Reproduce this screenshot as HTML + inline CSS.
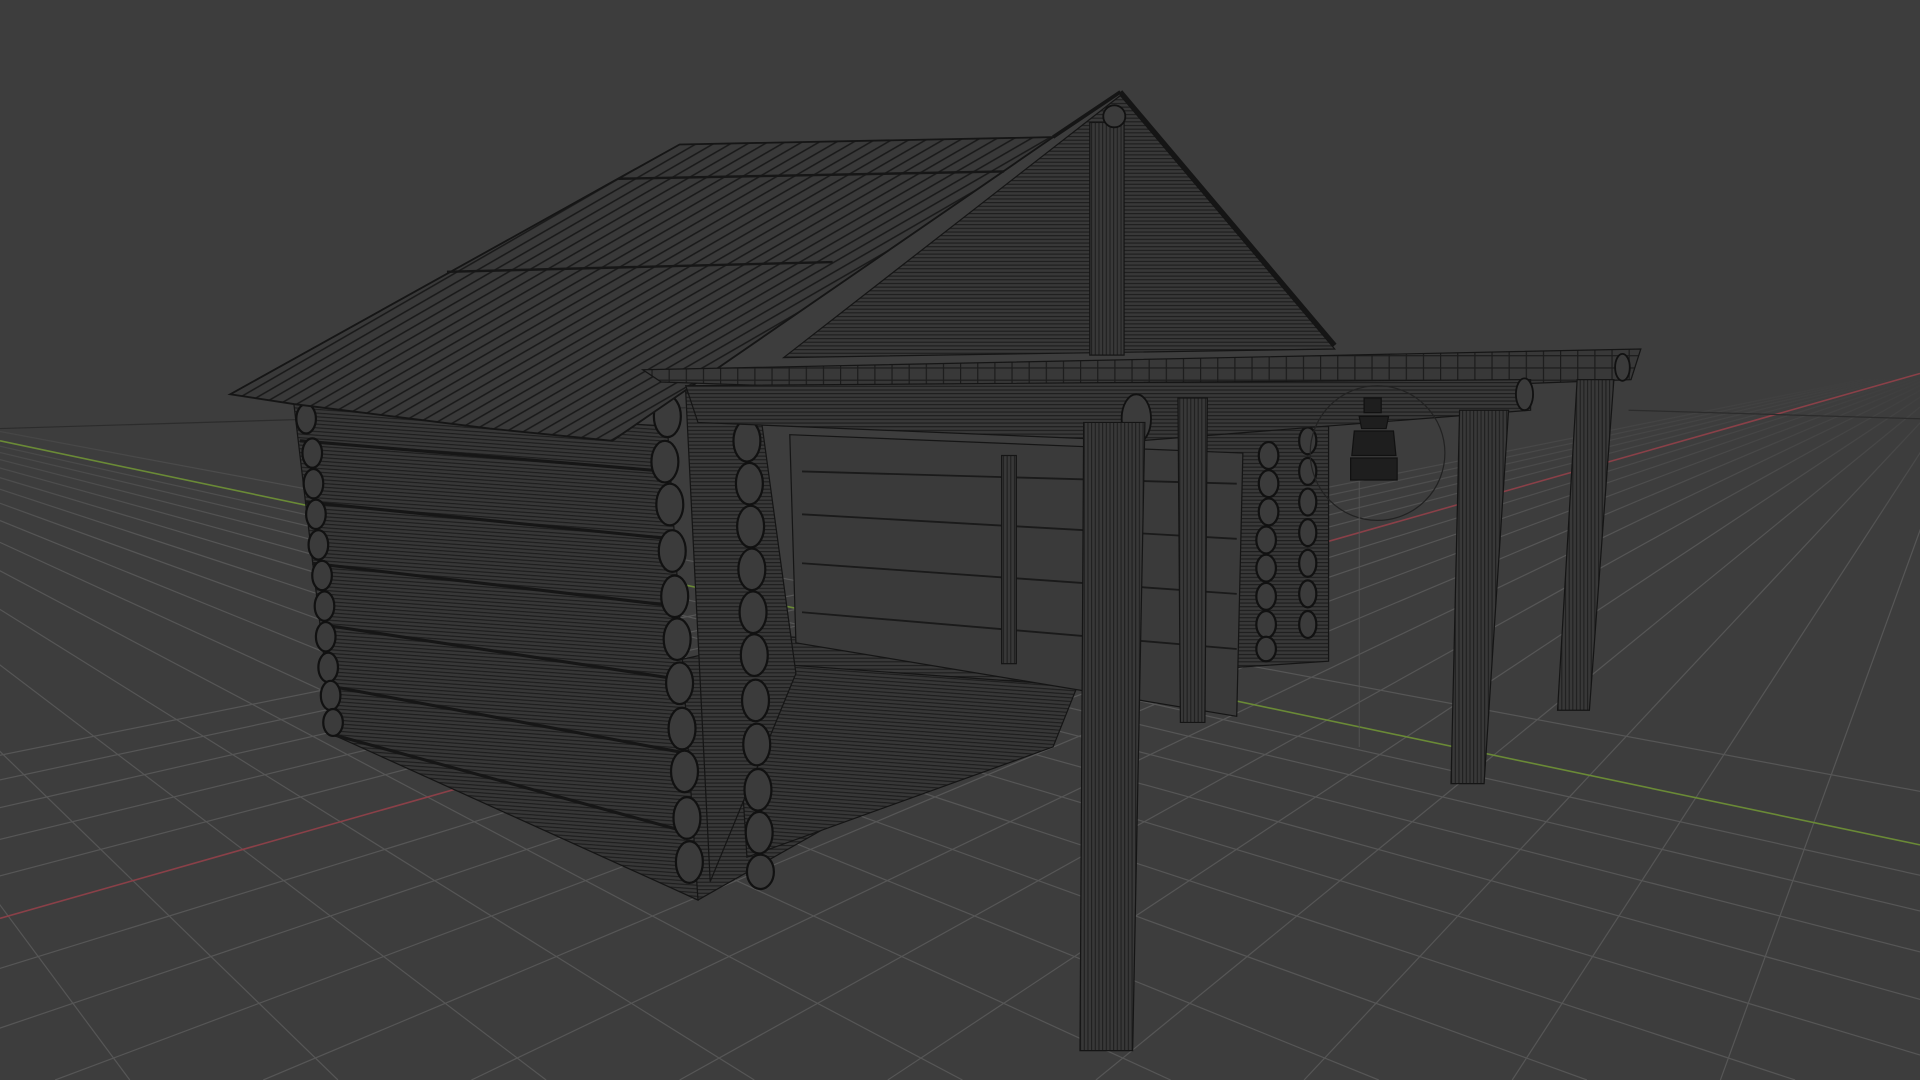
<!DOCTYPE html>
<html><head><meta charset="utf-8"><style>
html,body{margin:0;padding:0;background:#3d3d3d;overflow:hidden}
svg{display:block}
</style></head><body>
<svg width="1920" height="1080" viewBox="0 0 1568 882" preserveAspectRatio="none" xmlns="http://www.w3.org/2000/svg">
<defs>
<pattern id="h" width="8" height="3" patternUnits="userSpaceOnUse"><rect width="8" height="3" fill="#383838"/><line x1="0" y1="0.5" x2="8" y2="0.5" stroke="#1c1c1c" stroke-width="0.9"/></pattern>
<pattern id="hs" width="8" height="3" patternUnits="userSpaceOnUse" patternTransform="rotate(4)"><rect width="8" height="3" fill="#373737"/><line x1="0" y1="0.5" x2="8" y2="0.5" stroke="#1c1c1c" stroke-width="0.9"/></pattern>
<pattern id="r" width="12" height="7" patternUnits="userSpaceOnUse" patternTransform="rotate(-30)"><rect width="12" height="7" fill="#393939"/><line x1="0" y1="1" x2="12" y2="1" stroke="#1a1a1a" stroke-width="1.3"/></pattern>
<pattern id="v" width="3" height="8" patternUnits="userSpaceOnUse"><rect width="3" height="8" fill="#383838"/><line x1="0.5" y1="0" x2="0.5" y2="8" stroke="#1c1c1c" stroke-width="0.8"/></pattern>
<pattern id="g" width="14" height="10" patternUnits="userSpaceOnUse"><rect width="14" height="10" fill="#383838"/><path d="M0,0.5H14M0.5,0V10" stroke="#1c1c1c" stroke-width="1"/></pattern>
<linearGradient id="fade" x1="0" y1="0" x2="0" y2="1"><stop offset="0" stop-color="#3d3d3d" stop-opacity="1"/><stop offset="0.7" stop-color="#3d3d3d" stop-opacity="1"/><stop offset="1" stop-color="#3d3d3d" stop-opacity="0"/></linearGradient>
</defs>
<rect width="1568" height="882" fill="#3d3d3d"/>
<g stroke="#565656" stroke-width="1" fill="none">
<line x1="1620" y1="290" x2="-1315" y2="882"/><line x1="1620" y1="290" x2="-1145" y2="882"/>
<line x1="1620" y1="290" x2="-975" y2="882"/><line x1="1620" y1="290" x2="-805" y2="882"/>
<line x1="1620" y1="290" x2="-635" y2="882"/><line x1="1620" y1="290" x2="-295" y2="882"/>
<line x1="1620" y1="290" x2="-125" y2="882"/><line x1="1620" y1="290" x2="45" y2="882"/>
<line x1="1620" y1="290" x2="215" y2="882"/><line x1="1620" y1="290" x2="385" y2="882"/>
<line x1="1620" y1="290" x2="555" y2="882"/><line x1="1620" y1="290" x2="725" y2="882"/>
<line x1="1620" y1="290" x2="895" y2="882"/><line x1="1620" y1="290" x2="1065" y2="882"/>
<line x1="1620" y1="290" x2="1235" y2="882"/><line x1="1620" y1="290" x2="1405" y2="882"/>
<line x1="1620" y1="290" x2="1575" y2="882"/>
<line x1="-333" y1="290" x2="2826" y2="882"/><line x1="-333" y1="290" x2="2316" y2="882"/>
<line x1="-333" y1="290" x2="2146" y2="882"/><line x1="-333" y1="290" x2="1976" y2="882"/>
<line x1="-333" y1="290" x2="1806" y2="882"/><line x1="-333" y1="290" x2="1636" y2="882"/>
<line x1="-333" y1="290" x2="1466" y2="882"/><line x1="-333" y1="290" x2="1296" y2="882"/>
<line x1="-333" y1="290" x2="1126" y2="882"/><line x1="-333" y1="290" x2="956" y2="882"/>
<line x1="-333" y1="290" x2="786" y2="882"/><line x1="-333" y1="290" x2="616" y2="882"/>
<line x1="-333" y1="290" x2="446" y2="882"/><line x1="-333" y1="290" x2="276" y2="882"/>
<line x1="-333" y1="290" x2="106" y2="882"/><line x1="-333" y1="290" x2="-64" y2="882"/>
</g>
<rect x="0" y="0" width="1568" height="440" fill="url(#fade)"/>
<line x1="0" y1="750" x2="1568" y2="305" stroke="#8a4048" stroke-width="1.3"/>
<line x1="0" y1="360" x2="1568" y2="690" stroke="#6a8a36" stroke-width="1.3"/>
<line x1="0" y1="350" x2="560" y2="333" stroke="#2c2c2c" stroke-width="1"/>
<line x1="1330" y1="335" x2="1568" y2="342" stroke="#2c2c2c" stroke-width="1"/>

<polygon points="280,600 570,735 880,560 880,530 640,520" fill="url(#h)" stroke="#151515"/>
<polygon points="600,540 880,560 860,610 610,700" fill="url(#hs)" stroke="#151515"/>
<polygon points="915,78 1090,285 640,292" fill="url(#h)" stroke="#151515"/>
<polygon points="980,330 1085,330 1085,540 1010,545" fill="url(#h)" stroke="#151515"/>
<polygon points="240,330 545,348 570,735 272,600" fill="url(#hs)" stroke="#151515"/>
<g stroke="#161616" stroke-width="2.5">
<line x1="245" y1="360" x2="545" y2="385"/><line x1="250" y1="410" x2="548" y2="440"/><line x1="255" y1="460" x2="552" y2="495"/><line x1="262" y1="510" x2="556" y2="555"/><line x1="268" y1="560" x2="560" y2="615"/><line x1="272" y1="600" x2="563" y2="680"/>
</g>
<polygon points="560,320 620,330 650,550 580,720" fill="url(#h)" stroke="#151515"/>
<polygon points="645,355 1015,370 1010,585 650,525" fill="#3a3a3a" stroke="#151515"/>
<g stroke="#1a1a1a" stroke-width="1.5">
<line x1="655" y1="385" x2="1010" y2="395"/><line x1="655" y1="420" x2="1010" y2="440"/><line x1="655" y1="460" x2="1010" y2="485"/><line x1="655" y1="500" x2="1010" y2="530"/>
</g>
<rect x="818" y="372" width="12" height="170" fill="url(#v)" stroke="#151515"/>
<rect x="972" y="375" width="12" height="210" fill="url(#v)" stroke="#151515"/>
<g fill="#3b3b3b" stroke="#111" stroke-width="1.8">
<ellipse cx="545" cy="340" rx="11" ry="17"/><ellipse cx="543" cy="377" rx="11" ry="17"/><ellipse cx="547" cy="412" rx="11" ry="17"/>
<ellipse cx="549" cy="450" rx="11" ry="17"/><ellipse cx="551" cy="487" rx="11" ry="17"/><ellipse cx="553" cy="522" rx="11" ry="17"/>
<ellipse cx="555" cy="558" rx="11" ry="17"/><ellipse cx="557" cy="595" rx="11" ry="17"/><ellipse cx="559" cy="630" rx="11" ry="17"/>
<ellipse cx="561" cy="668" rx="11" ry="17"/><ellipse cx="563" cy="704" rx="11" ry="17"/>
<ellipse cx="610" cy="360" rx="11" ry="17"/><ellipse cx="612" cy="395" rx="11" ry="17"/><ellipse cx="613" cy="430" rx="11" ry="17"/>
<ellipse cx="614" cy="465" rx="11" ry="17"/><ellipse cx="615" cy="500" rx="11" ry="17"/><ellipse cx="616" cy="535" rx="11" ry="17"/>
<ellipse cx="617" cy="572" rx="11" ry="17"/><ellipse cx="618" cy="608" rx="11" ry="17"/><ellipse cx="619" cy="645" rx="11" ry="17"/>
<ellipse cx="620" cy="680" rx="11" ry="17"/><ellipse cx="621" cy="712" rx="11" ry="14"/>
<ellipse cx="250" cy="342" rx="8" ry="12"/><ellipse cx="255" cy="370" rx="8" ry="12"/><ellipse cx="256" cy="395" rx="8" ry="12"/>
<ellipse cx="258" cy="420" rx="8" ry="12"/><ellipse cx="260" cy="445" rx="8" ry="12"/><ellipse cx="263" cy="470" rx="8" ry="12"/>
<ellipse cx="265" cy="495" rx="8" ry="12"/><ellipse cx="266" cy="520" rx="8" ry="12"/><ellipse cx="268" cy="545" rx="8" ry="12"/>
<ellipse cx="270" cy="568" rx="8" ry="12"/><ellipse cx="272" cy="590" rx="8" ry="11"/>
<ellipse cx="1036" cy="372" rx="8" ry="11"/><ellipse cx="1036" cy="395" rx="8" ry="11"/><ellipse cx="1036" cy="418" rx="8" ry="11"/>
<ellipse cx="1034" cy="441" rx="8" ry="11"/><ellipse cx="1034" cy="464" rx="8" ry="11"/><ellipse cx="1034" cy="487" rx="8" ry="11"/>
<ellipse cx="1034" cy="510" rx="8" ry="11"/><ellipse cx="1034" cy="530" rx="8" ry="10"/>
<ellipse cx="1068" cy="360" rx="7" ry="11"/><ellipse cx="1068" cy="385" rx="7" ry="11"/><ellipse cx="1068" cy="410" rx="7" ry="11"/>
<ellipse cx="1068" cy="435" rx="7" ry="11"/><ellipse cx="1068" cy="460" rx="7" ry="11"/><ellipse cx="1068" cy="485" rx="7" ry="11"/><ellipse cx="1068" cy="510" rx="7" ry="11"/>
</g>
<polygon points="188,322 555,118 860,112 500,360 400,350 240,330" fill="url(#r)" stroke="#151515" stroke-width="1.5"/>
<line x1="365" y1="222" x2="680" y2="214" stroke="#161616" stroke-width="2"/>
<line x1="505" y1="146" x2="820" y2="140" stroke="#161616" stroke-width="2"/>
<line x1="860" y1="112" x2="915" y2="75" stroke="#151515" stroke-width="3"/>
<line x1="915" y1="75" x2="1090" y2="282" stroke="#151515" stroke-width="4"/>
<rect x="890" y="100" width="28" height="190" fill="url(#v)" stroke="#151515"/>
<circle cx="910" cy="95" r="9" fill="#3b3b3b" stroke="#111" stroke-width="1.5"/>
<polygon points="525,302 1340,285 1332,310 930,325 540,312" fill="url(#g)" stroke="#151515"/>
<polygon points="560,315 1250,310 1250,335 930,360 570,345" fill="url(#h)" stroke="#151515"/>
<ellipse cx="928" cy="342" rx="12" ry="20" fill="#3b3b3b" stroke="#111" stroke-width="1.5"/>
<ellipse cx="1245" cy="322" rx="7" ry="13" fill="#3b3b3b" stroke="#111" stroke-width="1.5"/>
<ellipse cx="1325" cy="300" rx="6" ry="11" fill="#3b3b3b" stroke="#111" stroke-width="1.5"/>
<polygon points="962,325 986,325 984,590 964,590" fill="url(#v)" stroke="#151515"/>
<polygon points="885,345 935,345 925,858 882,858" fill="url(#v)" stroke="#151515"/>
<polygon points="1192,335 1232,335 1212,640 1185,640" fill="url(#v)" stroke="#151515"/>
<polygon points="1288,310 1318,310 1298,580 1272,580" fill="url(#v)" stroke="#151515"/>
<circle cx="1125" cy="370" r="55" fill="none" stroke="#222" stroke-width="1"/>
<line x1="1110" y1="390" x2="1110" y2="610" stroke="#555" stroke-width="0.7"/>
<path d="M1114,325 h14 v12 h-14 z M1110,340 h24 l-2,10 h-20 z M1106,352 h32 l2,20 h-36 z M1103,374 h38 v18 h-38 z" fill="#1e1e1e" stroke="#111"/>
</svg>
</body></html>
